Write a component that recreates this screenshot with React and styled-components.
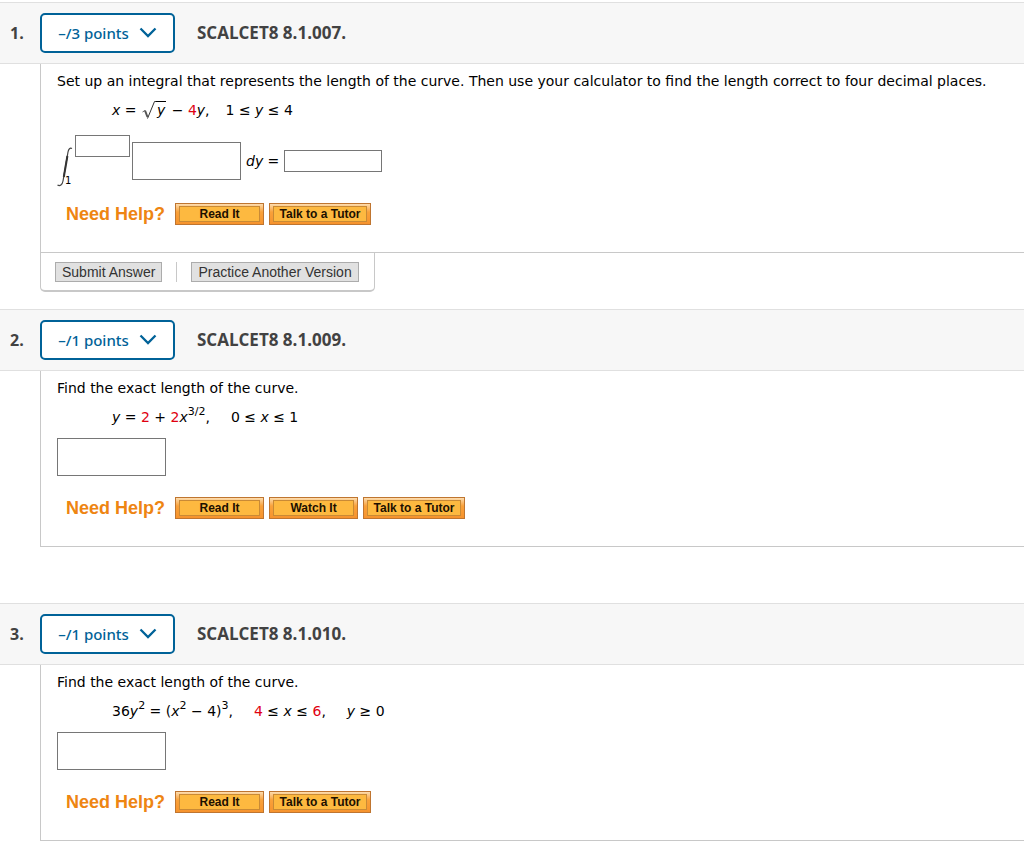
import React from 'react';
import styled, { createGlobalStyle } from 'styled-components';

const palette = {
    blue: '#006298',
    text: '#000',
    heading: '#424242',
    red: '#e00010',
    orange: '#ee8512',
    line: '#c8c8c8',
    bar: '#f7f7f7',
    barLine: '#e0e0e0'
};

const GlobalStyle = createGlobalStyle`
    * {
        box-sizing: border-box;
    }

    body {
        margin: 0;
        background: #fff;
        color: ${palette.text};
        font-family: Verdana, 'DejaVu Sans', sans-serif;
        font-size: 14px;
        line-height: 20px;
    }
`;

const Page = styled.main`
    padding-top: 2px;
`;

const Question = styled.section`
    display: flow-root;
`;

const Header = styled.header`
    display: flex;
    align-items: center;
    height: 62px;
    background: ${palette.bar};
    border-top: 1px solid ${palette.barLine};
    border-bottom: 1px solid ${palette.barLine};
    color: ${palette.heading};
    font-family: 'Open Sans', 'Noto Sans', sans-serif;
    font-size: 16px;
    font-weight: 700;
`;

const Number = styled.span`
    width: 40px;
    padding-left: 10px;
`;

const PointsButton = styled.button`
    display: flex;
    align-items: center;
    justify-content: center;
    gap: 10px;
    width: 135px;
    height: 40px;
    padding: 0;
    border: 2px solid ${palette.blue};
    border-radius: 5px;
    background: #fff;
    color: ${palette.blue};
    font-family: 'Noto Sans', 'Open Sans', sans-serif;
    font-size: 15px;
    font-weight: 500;
    cursor: pointer;
`;

const Title = styled.h2`
    margin: 0 0 0 22px;
    font-size: 17px;
    font-weight: 700;
`;

const Body = styled.div`
    margin-left: 40px;
    padding: 7px 16px 27px;
    border-left: 1px solid ${palette.line};
    border-bottom: 1px solid ${palette.line};
`;

const Prompt = styled.p`
    margin: 0;
`;

const Equation = styled.p`
    height: 20px;
    margin: 9px 0 0 55px;
    white-space: pre;

    & sup {
        font-size: 11px;
        line-height: 0;
        vertical-align: 7px;
    }
`;

const Condition = styled.span`
    margin-left: ${props => (props.$tight ? 16 : 21)}px;
`;

const Red = styled.span`
    color: ${palette.red};
`;

const Root = styled.span`
    margin: 0 1px;

    & svg {
        width: 14px;
        height: 18px;
        vertical-align: -4px;
    }
`;

const Radicand = styled.i`
    padding: 0 1px;
    border-top: 1px solid ${palette.text};
`;

const IntegralRow = styled.div`
    display: flex;
    align-items: flex-start;
    height: 52px;
    margin-top: 15px;
`;

const Integral = styled.div`
    display: flex;
    align-items: flex-end;
    width: 18px;
    height: 52px;

    & svg {
        flex: none;
        width: 16px;
        height: 40px;
    }
`;

const LowerLimit = styled.span`
    margin-left: -8px;
    font-size: 10px;
    line-height: 12px;
`;

const Field = styled.input`
    width: ${props => props.$width}px;
    height: ${props => props.$height}px;
    padding: 0 4px;
    border: 1px solid #767676;
    border-radius: 0;
    background: #fff;
    font: inherit;
`;

const Integrand = styled.div`
    display: flex;
    align-items: center;
    gap: 5px;
    margin: 7px 0 0 2px;
`;

const AnswerField = styled(Field)`
    display: block;
    margin-top: 11px;
`;

const Help = styled.div`
    display: flex;
    align-items: center;
    gap: 5px;
    margin-top: ${props => props.$top}px;
    padding-left: 9px;
`;

const HelpLabel = styled.span`
    margin-right: 5px;
    color: ${palette.orange};
    font: bold 18px/22px 'Liberation Sans', Arial, sans-serif;
`;

const HelpButton = styled.button`
    width: ${props => (props.$wide ? 102 : 89)}px;
    height: 22px;
    padding: 2px 3px;
    border: 1px solid #bf7530;
    background: linear-gradient(#fddcae, #f9a13a 40%, #f6932d);
    cursor: pointer;

    & span {
        display: block;
        height: 16px;
        border: 1px solid #c98a35;
        background: #fdb940;
        color: #1c1000;
        font: bold 12px/15px 'Liberation Sans', Arial, sans-serif;
        white-space: nowrap;
    }
`;

const Footer = styled.footer`
    display: flex;
    align-items: center;
    width: fit-content;
    height: 39px;
    margin-left: 40px;
    padding: 0 15px 0 14px;
    border: 1px solid ${palette.line};
    border-top: 0;
    border-bottom-width: 2px;
    border-radius: 0 0 5px 5px;
`;

const Divider = styled.span`
    width: 1px;
    height: 20px;
    margin: 0 14px;
    background: ${palette.line};
`;

const ActionButton = styled.button`
    height: 20px;
    padding: 0 6px;
    border: 1px solid #acacac;
    background: #e1e1e1;
    color: #333;
    font: 14px/18px 'Liberation Sans', Arial, sans-serif;
    cursor: pointer;
`;

const Gap = styled.div`
    height: ${props => props.$size}px;
`;

const Chevron = () => (
    <svg width="18" height="12" viewBox="0 0 18 12" aria-hidden="true">
        <path d="M1.5 1.5 L9 9 L16.5 1.5" fill="none" stroke="currentColor" strokeWidth="2.3" />
    </svg>
);

const RadicalSign = () => (
    <svg viewBox="0 0 14 18" aria-hidden="true">
        <path d="M0.5 11 L3 9.5" fill="none" stroke="#666" strokeWidth="1" />
        <path d="M3 9.5 L5.5 16" fill="none" stroke="#555" strokeWidth="2" />
        <path d="M5.5 17.5 L12.5 0.5 H14" fill="none" stroke="#333" strokeWidth="1" />
    </svg>
);

const IntegralSign = () => (
    <svg viewBox="0 0 16 40" aria-hidden="true">
        <path
            d="M15 1.5 C13 0.5 11.5 2 11 5 L6 34 C5.3 38 3 39.5 0.5 38"
            fill="none"
            stroke="#444"
            strokeWidth="1.2"
        />
        <path d="M10.4 9 L6.8 30" fill="none" stroke="#333" strokeWidth="2" />
    </svg>
);

const NeedHelp = ({ items, top }) => (
    <Help $top={top}>
        <HelpLabel>Need Help?</HelpLabel>
        {items.map(item => (
            <HelpButton key={item} type="button" $wide={item === 'Talk to a Tutor'}>
                <span>{item}</span>
            </HelpButton>
        ))}
    </Help>
);

const QuestionHeader = ({ number, points, title }) => (
    <Header>
        <Number>{number}.</Number>
        <PointsButton type="button">
            –/{points} points <Chevron />
        </PointsButton>
        <Title>{title}</Title>
    </Header>
);

const App = () => {
    return (
        <Page>
            <GlobalStyle />
            <Question>
                <QuestionHeader number={1} points={3} title="SCALCET8 8.1.007." />
                <Body>
                    <Prompt>
                        Set up an integral that represents the length of the curve. Then use your
                        calculator to find the length correct to four decimal places.
                    </Prompt>
                    <Equation>
                        <i>x</i> ={' '}
                        <Root>
                            <RadicalSign />
                            <Radicand>y</Radicand>
                        </Root>
                        {' − '}
                        <Red>4</Red>
                        <i>y</i>,
                        <Condition $tight>
                            1 ≤ <i>y</i> ≤ 4
                        </Condition>
                    </Equation>
                    <IntegralRow>
                        <Integral>
                            <IntegralSign />
                            <LowerLimit>1</LowerLimit>
                        </Integral>
                        <Field aria-label="Upper limit" $width={55} $height={22} />
                        <Integrand>
                            <Field aria-label="Integrand" $width={109} $height={38} />
                            <label htmlFor="length">
                                <i>dy</i> =
                            </label>
                            <Field id="length" $width={98} $height={22} />
                        </Integrand>
                    </IntegralRow>
                    <NeedHelp top={16} items={['Read It', 'Talk to a Tutor']} />
                </Body>
                <Footer>
                    <ActionButton type="button">Submit Answer</ActionButton>
                    <Divider />
                    <ActionButton type="button">Practice Another Version</ActionButton>
                </Footer>
                <Gap $size={17} />
            </Question>
            <Question>
                <QuestionHeader number={2} points={1} title="SCALCET8 8.1.009." />
                <Body>
                    <Prompt>Find the exact length of the curve.</Prompt>
                    <Equation>
                        <i>y</i> = <Red>2</Red> + <Red>2</Red>
                        <i>x</i>
                        <sup>3/2</sup>,
                        <Condition>
                            0 ≤ <i>x</i> ≤ 1
                        </Condition>
                    </Equation>
                    <AnswerField aria-label="Answer" $width={109} $height={38} />
                    <NeedHelp top={21} items={['Read It', 'Watch It', 'Talk to a Tutor']} />
                </Body>
                <Gap $size={56} />
            </Question>
            <Question>
                <QuestionHeader number={3} points={1} title="SCALCET8 8.1.010." />
                <Body>
                    <Prompt>Find the exact length of the curve.</Prompt>
                    <Equation>
                        36<i>y</i>
                        <sup>2</sup> = (<i>x</i>
                        <sup>2</sup> − 4)<sup>3</sup>,
                        <Condition>
                            <Red>4</Red> ≤ <i>x</i> ≤ <Red>6</Red>,
                        </Condition>
                        <Condition>
                            <i>y</i> ≥ 0
                        </Condition>
                    </Equation>
                    <AnswerField aria-label="Answer" $width={109} $height={38} />
                    <NeedHelp top={21} items={['Read It', 'Talk to a Tutor']} />
                </Body>
            </Question>
        </Page>
    );
};

export default App;
